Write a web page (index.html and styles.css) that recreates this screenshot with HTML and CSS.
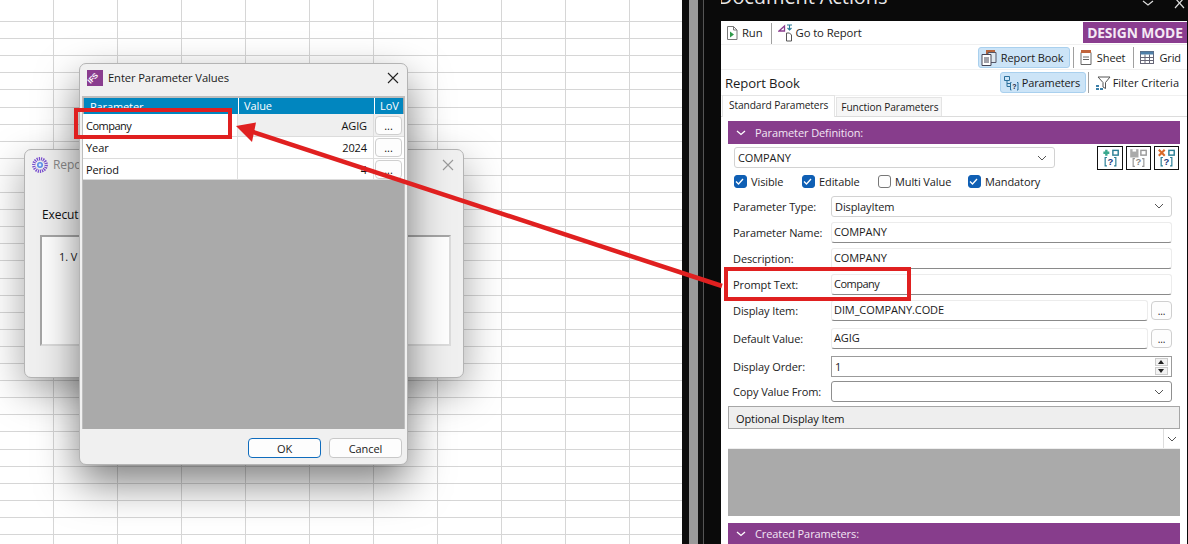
FILE: index.html
```html
<!DOCTYPE html>
<html lang="en">
<head>
<meta charset="utf-8">
<title>Document Actions</title>
<link rel="stylesheet" href="styles.css">
</head>
<body>
<div class="stage">
  <main class="sheet"></main>

  <section class="win back">
    <header class="back-title">
      <svg class="spark" width="16" height="16" viewBox="0 0 16 16"><circle cx="8" cy="8" r="6.2" fill="none" stroke="#7a4fd0" stroke-width="3.4" stroke-dasharray="1.2 .9"/><circle cx="8" cy="8" r="3" fill="#5b8fe8"/><circle cx="8" cy="8" r="1.4" fill="#dfeaff"/></svg>
      <span class="back-name">Repo</span>
      <svg class="x" width="12" height="12" viewBox="0 0 12 12"><path d="M1 1l10 10M11 1L1 11" stroke="#9a9a9a" stroke-width="1.1" fill="none"/></svg>
    </header>
    <p class="back-exec">Execut</p>
    <div class="back-box"><span>1. V</span></div>
  </section>

  <section class="win main">
    <header class="dlg-title">
      <svg class="ifs" width="16" height="16" viewBox="0 0 16 16"><rect width="16" height="16" fill="#8a3d8f"/><text x="3.500" y="14" transform="rotate(-45 3.500 14)" font-size="7.500" font-weight="700" fill="#fff" font-family="Liberation Sans, sans-serif">IFS</text></svg>
      <span class="dlg-name">Enter Parameter Values</span>
      <svg class="x" width="12" height="12" viewBox="0 0 12 12"><path d="M1 1l10 10M11 1L1 11" stroke="#222" stroke-width="1.1" fill="none"/></svg>
    </header>
    <div class="table">
      <div class="thead"><span class="th">Parameter</span><span class="th">Value</span><span class="th">LoV</span></div>
      <div class="tr sel"><span class="td tight">Company</span><span class="td num">AGIG</span><span class="td lov"><button class="dots">...</button></span></div>
      <div class="tr"><span class="td">Year</span><span class="td num">2024</span><span class="td lov"><button class="dots">...</button></span></div>
      <div class="tr last"><span class="td">Period</span><span class="td num">4</span><span class="td lov"><button class="dots">...</button></span></div>
      <div class="tfill"></div>
    </div>
    <footer class="dlg-foot">
      <button class="btn primary">OK</button>
      <button class="btn">Cancel</button>
    </footer>
  </section>

  <div class="strips"><i class="s-black"></i><i class="s-gray"></i><i class="s-dark"></i></div>

  <aside class="pane">
    <header class="pane-title">
      <h1>Document Actions</h1>
      <svg class="pt-chev" width="12" height="8" viewBox="0 0 12 8"><path d="M1 1l5 4 5-4" stroke="#ddd" fill="none" stroke-width="1.2"/></svg>
      <svg class="pt-x" width="12" height="10" viewBox="0 0 12 10"><path d="M1 -2l9 10M10 -2L1 8" stroke="#ddd" fill="none" stroke-width="1.2"/></svg>
    </header>
    <div class="body">
      <div class="bar bar1">
        <svg class="ic" width="14" height="16" viewBox="0 0 14 16"><path d="M2.5 1.5h6l3.5 3.5v9.5h-9.5z" fill="#fff" stroke="#777"/><path d="M8.5 1.5v3.5h3.500" fill="none" stroke="#777"/><path d="M5 6.500l4 3-4 3z" fill="#2f9a4a"/></svg>
        <span class="lbl run">Run</span>
        <i class="sep s1"></i>
        <svg class="ic" width="15" height="18" viewBox="0 0 15 18"><path d="M1 7l5.500-5v5z" fill="none" stroke="#8a3d8f" stroke-width="1.3"/><path d="M9 1h5M11.500 1v5M9.500 4l2 2 2-2" fill="none" stroke="#2a7a96" stroke-width="1.100"/><path d="M8.500 9h3l2 2v6h-5z" fill="#fff" stroke="#555"/></svg>
        <span class="lbl goto">Go to Report</span>
        <b class="mode">DESIGN MODE</b>
      </div>
      <div class="bar bar2">
        <span class="tool on tb"><svg width="16" height="17" viewBox="0 0 16 17"><rect x="5" y="1" width="9" height="4" fill="#b5643c"/><path d="M7 3.500h8v10h-8z" fill="#dfe8ef" stroke="#556"/><path d="M1 5.500h9v11h-9z" fill="#fff" stroke="#445"/><path d="M3 9h5M3 11h5M3 13h5" stroke="#445"/></svg><span>Report Book</span></span>
        <i class="sep"></i>
        <span class="tool ts"><svg width="12" height="16" viewBox="0 0 12 16"><path d="M1 3.500h10v12h-10z" fill="#fff" stroke="#666"/><rect x="1" y="1" width="10" height="3" fill="#c0643c"/><path d="M3 8h6M3 10.500h6" stroke="#666"/></svg><span>Sheet</span></span>
        <i class="sep"></i>
        <span class="tool tg"><svg width="14" height="13" viewBox="0 0 14 13"><rect x=".5" y=".5" width="13" height="12" fill="#fff" stroke="#667"/><rect x=".5" y=".5" width="13" height="3" fill="#4e7fa8"/><path d="M.5 6.500h13M.5 9.500h13M5 3.500v9M9.500 3.500v9" stroke="#667"/></svg><span>Grid</span></span>
      </div>
      <div class="bar bar3">
        <span class="book">Report Book</span>
        <span class="tool on tp"><svg width="16" height="16" viewBox="0 0 16 16"><path d="M1.500 1.500h5v4h-5zM4 5.500v6h3M4 8.500h3" fill="none" stroke="#2a6f9a"/><path d="M8.500 7.500h-1v7.500h1M14 7.500h1v7.500h-1" fill="none" stroke="#2a6f9a"/><text x="9.300" y="14" font-size="7" font-weight="700" fill="#223" font-family="Liberation Sans, sans-serif">?</text></svg><span>Parameters</span></span>
        <i class="sep"></i>
        <span class="tool tf"><svg width="16" height="16" viewBox="0 0 16 16"><path d="M3 2h12l-4.500 5.500v6l-2.500-1.500v-4.500z" fill="#fff" stroke="#555"/><path d="M1 10h3v2h-3zM1 13h3v2h-3zM5 13h3v2h-3z" fill="#3c7fa8"/></svg><span>Filter Criteria</span></span>
      </div>
      <nav class="tabs"><span class="tab cur">Standard Parameters</span><span class="tab">Function Parameters</span></nav>
      <div class="content">
        <div class="sect"><svg width="10" height="6" viewBox="0 0 10 6"><path d="M1 1l4 3.500 4-3.500" fill="none" stroke="#fff" stroke-width="1.300"/></svg><span>Parameter Definition:</span></div>
        <div class="pick">
          <div class="combo pick-combo"><span>COMPANY</span><svg width="10" height="6" viewBox="0 0 10 6"><path d="M1 1l4 4 4-4" fill="none" stroke="#555"/></svg></div>
          <div class="pick-btns">
            <span class="sq"><svg viewBox="0 0 16 16"><path d="M2 4h5M4.500 1.500v5" stroke="#3aa88e" stroke-width="2"/><rect x="10" y="2" width="4.500" height="4" fill="#fff" stroke="#2a7f96" stroke-width="1.200"/><path d="M5 8h-1.500v7h1.500M11 8h1.500v7h-1.500" fill="none" stroke="#2a7f96"/><text x="5.400" y="14" font-size="8" font-weight="700" fill="#223a80" font-family="Liberation Sans, sans-serif">?</text></svg></span>
            <span class="sq"><svg viewBox="0 0 16 16"><path d="M1 1h7v7h-7z" fill="#aaa"/><rect x="3" y="1" width="3" height="2" fill="#fff"/><rect x="10" y="2" width="4.500" height="4" fill="#fff" stroke="#999" stroke-width="1.200"/><path d="M5 9h-1.500v6.500h1.500M11 9h1.500v6.500h-1.500" fill="none" stroke="#999"/><text x="5.400" y="14.500" font-size="8" font-weight="700" fill="#888" font-family="Liberation Sans, sans-serif">?</text></svg></span>
            <span class="sq"><svg viewBox="0 0 16 16"><path d="M1.500 1.500l5 5M6.500 1.500l-5 5" stroke="#d96a28" stroke-width="1.800"/><rect x="10" y="2" width="4.500" height="4" fill="#fff" stroke="#2a7f96" stroke-width="1.200"/><path d="M5 8h-1.500v7h1.500M11 8h1.500v7h-1.500" fill="none" stroke="#2a7f96"/><text x="5.400" y="14" font-size="8" font-weight="700" fill="#223a80" font-family="Liberation Sans, sans-serif">?</text></svg></span>
          </div>
        </div>
        <div class="checks">
          <label class="chk c1"><i class="box on"><svg class="tick" width="9" height="7" viewBox="0 0 9 7"><path d="M1 3.500l2.500 2.500 4.500-5" fill="none" stroke="#fff" stroke-width="1.300"/></svg></i>Visible</label>
          <label class="chk c2"><i class="box on"><svg class="tick" width="9" height="7" viewBox="0 0 9 7"><path d="M1 3.500l2.500 2.500 4.500-5" fill="none" stroke="#fff" stroke-width="1.300"/></svg></i>Editable</label>
          <label class="chk c3"><i class="box"></i>Multi Value</label>
          <label class="chk"><i class="box on"><svg class="tick" width="9" height="7" viewBox="0 0 9 7"><path d="M1 3.500l2.500 2.500 4.500-5" fill="none" stroke="#fff" stroke-width="1.300"/></svg></i>Mandatory</label>
        </div>
        <div class="form">
          <div class="row"><span class="rl">Parameter Type:</span><div class="combo"><span>DisplayItem</span><svg width="10" height="6" viewBox="0 0 10 6"><path d="M1 1l4 4 4-4" fill="none" stroke="#555"/></svg></div></div>
          <div class="row"><span class="rl">Parameter Name:</span><div class="inp">COMPANY</div></div>
          <div class="row"><span class="rl">Description:</span><div class="inp">COMPANY</div></div>
          <div class="row"><span class="rl">Prompt Text:</span><div class="inp tight">Company</div></div>
          <div class="row r-display"><span class="rl">Display Item:</span><div class="inp-wrap"><div class="inp">DIM_COMPANY.CODE</div><button class="dots small">...</button></div></div>
          <div class="row r-default"><span class="rl">Default Value:</span><div class="inp-wrap"><div class="inp">AGIG</div><button class="dots small">...</button></div></div>
          <div class="row"><span class="rl">Display Order:</span><div class="spin"><span>1</span><span class="arrows"><i class="up"></i><i class="down"></i></span></div></div>
          <div class="row r-copy"><span class="rl">Copy Value From:</span><div class="combo strong"><span></span><svg width="10" height="6" viewBox="0 0 10 6"><path d="M1 1l4 4 4-4" fill="none" stroke="#555"/></svg></div></div>
        </div>
        <div class="opt-head">Optional Display Item</div>
        <div class="opt-row"><span></span><i><svg width="10" height="6" viewBox="0 0 10 6"><path d="M1 1l4 4 4-4" fill="none" stroke="#555"/></svg></i></div>
        <div class="opt-fill"></div>
        <div class="sect created"><svg width="10" height="6" viewBox="0 0 10 6"><path d="M1 1l4 3.500 4-3.500" fill="none" stroke="#fff" stroke-width="1.300"/></svg><span>Created Parameters:</span></div>
      </div>
    </div>
  </aside>

  <svg class="marks" width="1188" height="544" viewBox="0 0 1188 544">
    <rect x="76" y="110" width="154" height="27" fill="none" stroke="#e02020" stroke-width="4"/>
    <rect x="726" y="269" width="183" height="30" fill="none" stroke="#e02020" stroke-width="4"/>
    <path d="M722 286L250 131" stroke="#e02020" stroke-width="4.500"/>
    <path d="M236 126L256 122.500L252 142z" fill="#e02020"/>
  </svg>
</div>
</body>
</html>
```

FILE: styles.css
```css
* { box-sizing: border-box; }
html, body { margin: 0; padding: 0; }
body { font-family: "Open Sans", "Noto Sans", sans-serif; font-size: 11px; letter-spacing: -.1px; color: #1b1b1b; background: #fff; }
button { font: inherit; letter-spacing: inherit; color: inherit; padding: 0; }
i { display: block; font-style: normal; }
.tight { letter-spacing: -.5px; }

.stage { position: relative; width: 1188px; height: 544px; overflow: hidden; display: flex; background: #0a0a0a; }

.sheet {
  flex: none; width: 682px; height: 544px; background-color: #fff;
  background-image:
    repeating-linear-gradient(90deg, transparent 0, transparent 63px, #d6d6d6 63px, #d6d6d6 64px),
    repeating-linear-gradient(180deg, transparent 0, transparent 16.1px, #d6d6d6 16.1px, #d6d6d6 17.1px);
  background-position: -10px 0, 0 5px;
}

.strips { flex: none; width: 39px; display: flex; }
.s-black { width: 7px; background: #0d0d0d; }
.s-gray { width: 9px; background: #9a9a9a; }
.s-dark { width: 23px; background: #0a0a0a; border-left: 5px solid #111; box-shadow: inset 1px 0 0 #555; }

.win { position: absolute; background: #f0f0f0; border-radius: 7px; border: 1px solid #b4b4b4; }
.back { left: 24px; top: 149px; width: 440px; height: 229px; box-shadow: 0 14px 40px rgba(0,0,0,.36); }
.back-title { display: flex; align-items: center; height: 29px; padding: 0 9px 0 7px; gap: 5px; }
.back-name { flex: 1; color: #8a8a8a; font-size: 12px; }
.back-exec { margin: 26px 0 0 17px; font-size: 12px; line-height: 20px; color: #111; }
.back-box { margin: 10px 12px 0 15px; height: 111px; background: #fff; border: 2px solid #a6a6a6; border-right-color: #dcdcdc; border-bottom-color: #dcdcdc; padding: 12px 17px; }

.main { left: 79px; top: 63px; width: 329px; height: 402px; display: flex; flex-direction: column; box-shadow: 0 18px 42px rgba(0,0,0,.5); }
.dlg-title { display: flex; align-items: center; height: 27px; margin-bottom: 5px; padding: 0 8px 0 7px; gap: 5px; flex: none; }
.dlg-name { flex: 1; font-size: 11.200px; }
.table { margin: 0 2px; flex: none; height: 333px; display: flex; flex-direction: column; border: 1px solid #bdbdbd; border-top-width: 2px; border-bottom: 0; background: #aaa; }
.thead { display: grid; grid-template-columns: 154px 136px 1fr; height: 16px; margin: 0 1px; background: #0186bf; color: #fff; overflow: hidden; flex: none; }
.th { padding-left: 5px; line-height: 16px; border-left: 1px solid #fff; }
.th:first-child { border-left: 0; padding-left: 6px; line-height: 18px; }
.tr { display: grid; grid-template-columns: 155px 136px 1fr; height: 22px; background: #fff; border-bottom: 1px solid #dcdcdc; flex: none; }
.tr.sel { height: 23px; background: linear-gradient(90deg, #fff 48%, #efefef 48%); }
.tr.sel .td { line-height: 23px; }
.tr.sel .lov { padding-top: 2px; }
.tr.last { height: 21px; }
.td { padding: 0 6px 0 3px; line-height: 21px; border-right: 1px solid #dedede; overflow: hidden; color: #111; }
.num { text-align: right; }
.lov { padding: 1px 2px 0 1px; border-right: 0; }
.dots { display: block; width: 100%; height: 19px; background: #fdfdfd; border: 1px solid #cfcfcf; border-radius: 4px; line-height: 16px; text-align: center; }
.tfill { flex: 1; background: #aaa; }
.dlg-foot { display: flex; justify-content: flex-end; align-items: flex-start; gap: 8px; padding: 9px 5px 0 0; }
.btn { width: 73px; height: 20px; background: #fdfdfd; border: 1px solid #c8c8c8; border-radius: 4px; line-height: 17px; }
.primary { border: 1.500px solid #0f6cbd; }

.pane { flex: none; width: 467px; display: flex; flex-direction: column; }
.pane-title { flex: none; height: 21px; position: relative; overflow: hidden; color: #e8e8e8; }
.pane-title h1 { margin: -17px 0 0 -3px; font-size: 20px; font-weight: 400; line-height: 28px; }
.pt-chev { position: absolute; left: 421px; top: 0; }
.pt-x { position: absolute; left: 453px; top: 0; }
.body { flex: 1; width: 466px; background: #fff; display: flex; flex-direction: column; min-height: 0; }

.bar { display: flex; align-items: center; flex: none; border-bottom: 1px solid #f0f0f0; }
.bar1 { height: 24px; padding-left: 4px; align-items: stretch; }
.bar1 .ic { align-self: center; flex: none; }
.lbl { align-self: center; font-size: 11.300px; }
.run { margin-left: 3px; }
.s1 { margin: 2px 6px 1px 8px; height: auto; }
.goto { margin-left: 3px; }
.mode { margin: 1px 0 1px auto; width: 104px; background: #8a3d8f; color: #f4e9f5; font-size: 13.800px; line-height: 21px; text-align: center; }
.bar2 { height: 25px; justify-content: flex-end; padding-right: 6px; }
.bar3 { height: 26px; padding-right: 8px; }
.book { flex: 1; padding-left: 4px; font-size: 13.100px; }
.sep { width: 1px; height: 21px; background: #a0a0a0; flex: none; }
.tool { display: flex; align-items: center; gap: 5px; height: 21px; white-space: nowrap; }
.tool svg { flex: none; }
.on { background: #cce4f7; border: 1px solid #a9d0ee; border-radius: 3px; padding: 0 5px 0 3px; }
.tb { width: 92px; margin-right: 3px; padding-left: 2px; gap: 4px; }
.ts { margin: 0 8px 0 6px; }
.tg { margin-left: 6px; }
.tp { width: 86px; margin-right: 2px; padding-left: 2px; gap: 3px; }
.tf { margin-left: 6px; gap: 2px; letter-spacing: 0; }

.tabs { display: flex; align-items: flex-end; flex: none; height: 22px; padding-left: 1px; border-bottom: 1px solid #dcdcdc; margin-top: -1px; }
.tab { height: 19px; padding: 0 3px 0 4px; line-height: 18px; font-size: 10.200px; background: #f6f6f6; border: 1px solid #e4e4e4; border-bottom: 0; margin-left: 1px; }
.tab.cur { height: 22px; background: #fff; margin-left: 0; margin-bottom: -1px; padding: 0 6px; line-height: 19px; }

.content { padding: 4px 7px 0 7px; flex: 1; background: #fff; min-height: 0; }
.sect { display: flex; align-items: center; height: 23px; background: #873d8c; color: #f3e6f4; gap: 9px; padding-left: 8px; }
.pick { display: flex; align-items: center; height: 25px; margin: 1px 0 0; padding-left: 6px; }
.combo { display: flex; align-items: center; justify-content: space-between; height: 21px; background: #fff; border: 1px solid #d2d2d2; border-radius: 3px; padding: 0 7px 0 3px; flex: 1; }
.pick-combo { flex: none; width: 321px; }
.pick-btns { display: flex; margin-left: 42px; gap: 3px; }
.sq { display: flex; align-items: center; justify-content: center; width: 25px; height: 24px; border: 1px solid #111; background: #fff; }
.sq:first-child { width: 26px; }
.sq svg { width: 19px; height: 19px; }
.checks { display: flex; align-items: center; height: 23px; padding-left: 6px; }
.chk { display: flex; align-items: center; gap: 4px; }
.c1 { width: 68px; }
.c2 { width: 76px; }
.c3 { width: 90px; }
.box { width: 13px; height: 13px; border: 1px solid #777; border-radius: 3px; background: #fdfdfd; display: flex; align-items: center; justify-content: center; flex: none; }
.box.on { background: #0f5fb4; border-color: #0f5fb4; }
.tick { display: block; flex: none; }

.form { padding: 0 8px 0 5px; }
.row { display: grid; grid-template-columns: 98px 1fr; align-items: center; height: 26px; }
.r-display { height: 27px; }
.r-default { height: 29px; }
.r-copy { height: 25px; }
.rl { white-space: nowrap; color: #222; }
.inp { flex: 1; height: 21px; line-height: 17px; padding-left: 2px; background: #fff; border: 1px solid #ececec; border-bottom: 1px solid #8a8a8a; border-radius: 3px; }
.inp-wrap { display: flex; gap: 3px; align-items: center; }
.small { width: 21px; height: 19px; flex: none; font-size: 10px; }
.spin { display: flex; align-items: center; justify-content: space-between; height: 21px; border: 1px solid #9b9b9b; padding: 0 3px; background: #fff; }
.arrows { display: flex; flex-direction: column; gap: 1px; width: 13px; }
.arrows i { height: 8px; background: #f2f2f2; border: 1px solid #ccc; position: relative; }
.up::after { content: ""; position: absolute; left: 2px; top: 1px; border: 3.500px solid transparent; border-top: 0; border-bottom: 4px solid #222; }
.down::after { content: ""; position: absolute; left: 2px; top: 1px; border: 3.500px solid transparent; border-bottom: 0; border-top: 4px solid #222; }
.strong { border-color: #8f8f8f; }

.opt-head { margin-top: 2px; height: 23px; background: #eee; border: 1px solid #a6a6a6; padding-left: 7px; line-height: 24px; color: #111; }
.opt-row { display: flex; height: 20px; background: #fff; border-bottom: 1px solid #eee; }
.opt-row span { flex: 1; }
.opt-row i { width: 17px; display: flex; align-items: center; justify-content: center; border-left: 1px solid #ddd; }
.opt-fill { height: 67px; background: #aaa; }
.created { margin-top: 7px; height: 21px; }

.marks { position: absolute; left: 0; top: 0; pointer-events: none; }
```
